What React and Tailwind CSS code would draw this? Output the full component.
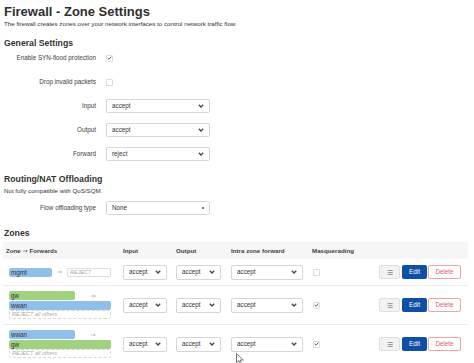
function Chevron() {
  return (
    <svg width="6" height="4" viewBox="0 0 6 4" className="shrink-0">
      <polyline points="0.8,0.8 3,3 5.2,0.8" fill="none" stroke="#444" strokeWidth="1.3" />
    </svg>
  )
}

function Select({ value, w, tiny }) {
  return (
    <div
      className={`flex items-center justify-between border border-[#d6d6d6] rounded-[2px] bg-white pl-[5px] pr-[5px] text-[6.3px] leading-none text-[#333] ${w}`}
    >
      <span>{value}</span>
      {tiny ? <span className="w-[2px] h-[2px] rounded-full bg-[#555]" /> : <Chevron />}
    </div>
  )
}

function Check({ checked }) {
  return (
    <div className="w-[7px] h-[7px] border border-[#dcdcdc] rounded-[1px] flex items-center justify-center">
      {checked && (
        <svg width="7" height="6" viewBox="0 0 7 6">
          <polyline points="1,3 2.8,4.8 6,1" fill="none" stroke="#444" strokeWidth="1.2" />
        </svg>
      )}
    </div>
  )
}

function FormRow({ label, children }) {
  return (
    <div className="flex items-center h-[16px]">
      <div className="w-[92px] text-right text-[6.3px] text-[#404040]">{label}</div>
      <div className="ml-[10px] flex items-center">{children}</div>
    </div>
  )
}

function Badge({ name, color, w }) {
  return (
    <div className={`h-[9px] rounded-[2px] pl-[2px] text-[6.3px] leading-[9px] text-[#333] ${color} ${w}`}>
      {name}
    </div>
  )
}

function Actions() {
  return (
    <div className="flex items-center gap-[1px] text-[6.3px] leading-none">
      <div className="w-[21px] h-[14px] flex items-center justify-center rounded-[2px] bg-[#f3f3f3] border border-[#e0e0e0] text-[#888] text-[7px]">
        ☰
      </div>
      <div className="ml-[1px] w-[25px] h-[14px] flex items-center justify-center rounded-[2px] bg-[#0f4fa6] text-white">
        Edit
      </div>
      <div className="w-[33px] h-[14px] flex items-center justify-center rounded-[2px] bg-white border border-[#f2a3a3] text-[#e06060]">
        Delete
      </div>
    </div>
  )
}

function ZoneRow({ zone, masq, first }) {
  return (
    <div className={`flex items-center ${first ? 'h-[26px]' : 'py-[5px] border-t border-[#ececec]'}`}>
      <div className="w-[117px] pl-[6px]">{zone}</div>
      <div className="w-[53px] pl-[3px]">
        <Select value="accept" w="w-[44px] h-[15px]" />
      </div>
      <div className="w-[55px] pl-[3px]">
        <Select value="accept" w="w-[45px] h-[15px]" />
      </div>
      <div className="w-[81px] pl-[3px]">
        <Select value="accept" w="w-[72px] h-[15px]" />
      </div>
      <div className="w-[70px] pl-[4px]">
        <Check checked={masq} />
      </div>
      <div className="flex-1 flex justify-end pr-[7px]">
        <Actions />
      </div>
    </div>
  )
}

function Arrow() {
  return (
    <span className="font-['DejaVu_Sans',sans-serif] text-[6px] leading-none text-[#999]">⇒</span>
  )
}

function Reject({ text, dashed }) {
  return (
    <div
      className={`h-[9px] border rounded-[2px] pl-[2px] text-[5.5px] leading-[7px] italic text-[#aaa] ${dashed ? 'border-dashed border-[#d6d6d6]' : 'border-[#dedede] flex-1'}`}
    >
      {text}
    </div>
  )
}

function MultiZone({ a, aColor, b, bColor }) {
  return (
    <div className="w-[102px] flex flex-col">
      <div className="flex items-center h-[9px]">
        <Badge name={a} color={aColor} w="w-[66px]" />
        <div className="flex-1 flex justify-center">
          <Arrow />
        </div>
      </div>
      <div className="mt-[1px]">
        <Badge name={b} color={bColor} w="w-[102px]" />
      </div>
      <Reject text="REJECT all others" dashed />
    </div>
  )
}

export default function App() {
  return (
    <div className="relative w-[474px] h-[363px] overflow-hidden bg-white font-['Liberation_Sans',Arial,sans-serif] text-[#333]">
      <div className="pl-[4px] pt-[4px]">
        <h1 className="text-[13px] leading-[16px] font-bold text-[#2e2e2e]">Firewall - Zone Settings</h1>
        <p className="text-[6.2px] leading-[8px]">
          The firewall creates zones over your network interfaces to control network traffic flow.
        </p>

        <h2 className="mt-[10px] text-[8.7px] leading-[10px] font-bold">General Settings</h2>
        <div className="mt-[2px] flex flex-col gap-[8px]">
          <FormRow label="Enable SYN-flood protection">
            <Check checked />
          </FormRow>
          <FormRow label="Drop invalid packets">
            <Check />
          </FormRow>
          <FormRow label="Input">
            <Select value="accept" w="w-[104px] h-[14px]" />
          </FormRow>
          <FormRow label="Output">
            <Select value="accept" w="w-[104px] h-[14px]" />
          </FormRow>
          <FormRow label="Forward">
            <Select value="reject" w="w-[104px] h-[14px]" />
          </FormRow>
        </div>

        <h2 className="mt-[12px] text-[8.7px] leading-[10px] font-bold">Routing/NAT Offloading</h2>
        <p className="mt-[3px] text-[6.2px] leading-[8px]">Not fully compatible with QoS/SQM.</p>
        <div className="mt-[5px]">
          <FormRow label="Flow offloading type">
            <Select value="None" w="w-[104px] h-[14px]" tiny />
          </FormRow>
        </div>

        <h2 className="mt-[12px] text-[8.7px] leading-[10px] font-bold">Zones</h2>
      </div>

      <div className="mt-[4px] ml-[3px] w-[465px]">
        <div className="flex items-center h-[17px] bg-[#f6f6f6] text-[6.2px] font-bold text-[#404040]">
          <div className="w-[117px] pl-[3px]">
            Zone <span className="font-['DejaVu_Sans',sans-serif] font-normal">⇒</span> Forwards
          </div>
          <div className="w-[53px] pl-[3px]">Input</div>
          <div className="w-[55px] pl-[3px]">Output</div>
          <div className="w-[81px] pl-[3px]">Intra zone forward</div>
          <div className="pl-[3px]">Masquerading</div>
        </div>

        <ZoneRow
          first
          zone={
            <div className="flex items-center w-[102px]">
              <Badge name="mgmt" color="bg-[#90c0ea]" w="w-[43px]" />
              <div className="w-[15px] flex justify-center">
                <Arrow />
              </div>
              <Reject text="REJECT" />
            </div>
          }
        />
        <ZoneRow
          masq
          zone={<MultiZone a="gw" aColor="bg-[#a0d27f]" b="wwan" bColor="bg-[#90c0ea]" />}
        />
        <ZoneRow
          masq
          zone={<MultiZone a="wwan" aColor="bg-[#90c0ea]" b="gw" bColor="bg-[#a0d27f]" />}
        />
      </div>

      <svg className="absolute left-[236px] top-[353px]" width="8" height="12" viewBox="0 0 8 12">
        <path d="M0.5 0.5 L0.5 9.5 L2.8 7.5 L4.3 11 L5.6 10.4 L4.2 7 L7.3 7 Z" fill="#fff" stroke="#555" strokeWidth="0.8" />
      </svg>
    </div>
  )
}
